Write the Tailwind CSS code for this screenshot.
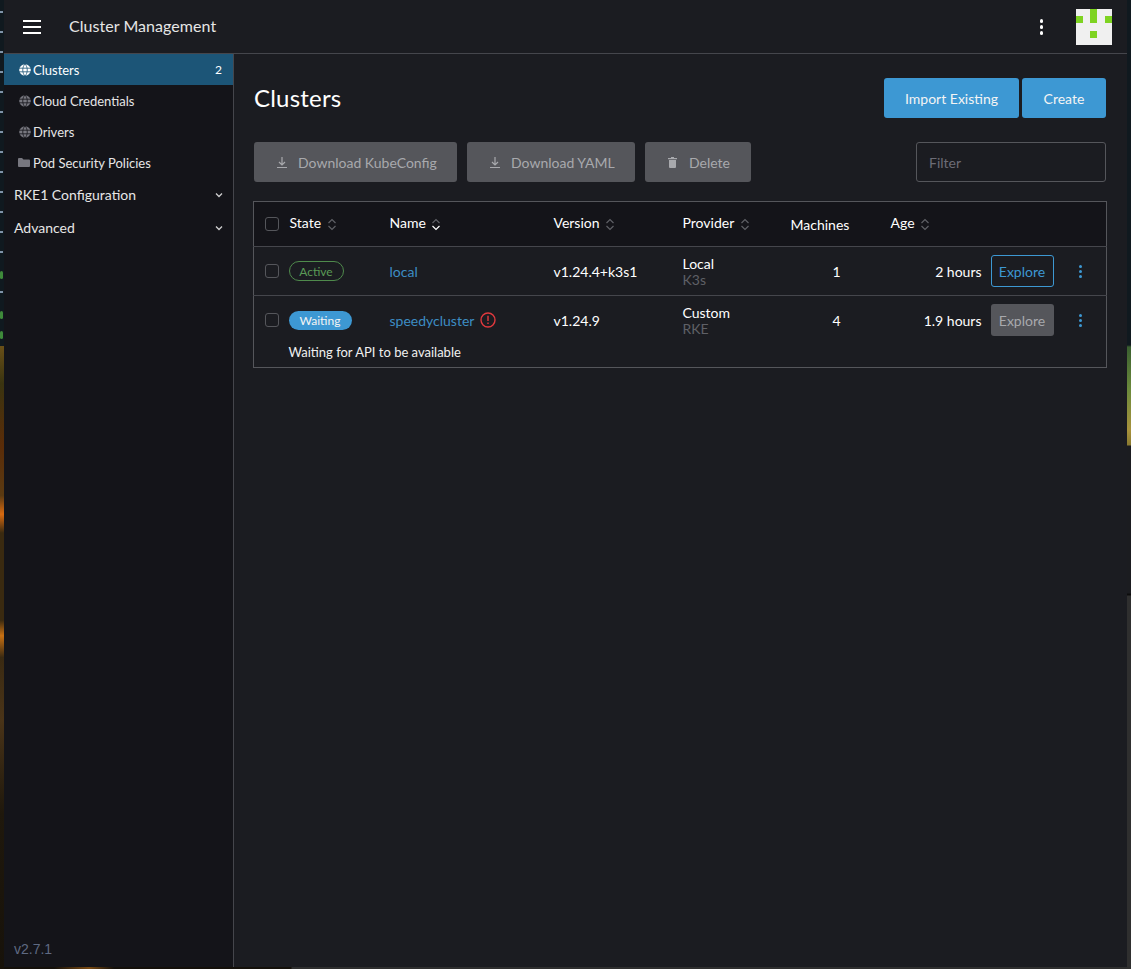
<!DOCTYPE html>
<html lang="en">
<head>
    <meta charset="UTF-8">
    <title>Cluster Management</title>
    <script src="https://cdn.jsdelivr.net/npm/@tailwindcss/browser@4"></script>
</head>
<body class="bg-[#0c0f10] font-['Lato',sans-serif] text-sm text-white overflow-hidden">
<div class="flex h-[969px]">
    <!-- desktop showing behind the window, left edge -->
    <svg class="shrink-0" width="4" height="969" viewBox="0 0 4 969">
        <defs>
            <linearGradient id="wall" x1="0" y1="0" x2="0" y2="1">
                <stop offset="0" stop-color="#6a5018"/>
                <stop offset="0.06" stop-color="#3a3410"/>
                <stop offset="0.16" stop-color="#5a2c08"/>
                <stop offset="0.24" stop-color="#5a3a12"/>
                <stop offset="0.27" stop-color="#d86a10"/>
                <stop offset="0.30" stop-color="#3a2a10"/>
                <stop offset="0.44" stop-color="#3a2a10"/>
                <stop offset="0.465" stop-color="#c87012"/>
                <stop offset="0.50" stop-color="#3a2a12"/>
                <stop offset="0.60" stop-color="#4a3418"/>
                <stop offset="0.75" stop-color="#1f180c"/>
                <stop offset="1" stop-color="#17120a"/>
            </linearGradient>
        </defs>
        <rect width="4" height="346" fill="#10191f"/>
        <rect y="346" width="4" height="623" fill="url(#wall)"/>
        <g fill="#7f93a8">
            <rect y="11" width="3" height="2"/><rect y="31" width="3" height="2"/><rect y="51" width="3" height="2"/>
            <rect y="71" width="3" height="2"/><rect y="91" width="3" height="2"/><rect y="111" width="3" height="2"/>
            <rect y="131" width="3" height="2"/><rect y="151" width="3" height="2"/><rect y="171" width="3" height="2"/>
            <rect y="191" width="3" height="2"/><rect y="211" width="3" height="2"/><rect y="231" width="3" height="2"/>
            <rect y="251" width="3" height="2"/><rect y="291" width="3" height="2"/>
        </g>
        <g fill="#3f8a3a">
            <rect y="271" width="3" height="8" rx="1.500"/><rect y="311" width="3" height="8" rx="1.500"/><rect y="331" width="3" height="8" rx="1.500"/>
        </g>
    </svg>

    <div class="w-[1123px] shrink-0 flex flex-col">
        <div class="h-[967px] flex flex-col bg-[#1b1c21]">
            <!-- Top bar -->
            <header class="h-[54px] shrink-0 flex items-center border-b border-[#45464c]">
                <button class="ml-[19px] w-[18px] flex flex-col gap-[4px]">
                    <span class="block h-[2px] bg-white"></span>
                    <span class="block h-[2px] bg-white"></span>
                    <span class="block h-[2px] bg-white"></span>
                </button>
                <div class="ml-[28px] pb-[2px] text-base tracking-[0.05px] text-[#e6e6e6]">Cluster Management</div>
                <div class="ml-auto mr-[33px] flex flex-col gap-[2px]">
                    <span class="block w-[3px] h-[4px] rounded-full bg-white"></span>
                    <span class="block w-[3px] h-[4px] rounded-full bg-white"></span>
                    <span class="block w-[3px] h-[4px] rounded-full bg-white"></span>
                </div>
                <svg class="mr-[15px]" width="36" height="36" viewBox="0 0 36 36">
                    <rect width="36" height="36" fill="#f0f0f0"/>
                    <rect x="0" y="7" width="7" height="7" fill="#7ed321"/>
                    <rect x="14" y="0" width="7" height="14" fill="#7ed321"/>
                    <rect x="29" y="7" width="7" height="7" fill="#7ed321"/>
                    <rect x="14" y="22" width="7" height="7" fill="#7ed321"/>
                </svg>
            </header>

            <div class="flex flex-1 min-h-0">
                <!-- Sidebar -->
                <aside class="w-[230px] shrink-0 flex flex-col bg-[#141419] border-r border-[#45464c]">
                    <a class="h-[31px] flex items-center pl-[15px] pr-[11px] bg-[#1c5577] text-[13px] text-white">
                        <svg class="mr-[2px]" width="12" height="12" viewBox="0 0 12 12" fill="none" stroke="#1c5577" stroke-width="0.800"><circle cx="6" cy="6" r="5.800" fill="#ffffff" stroke="none"/><path d="M0 4.200h12M0 7.800h12M6 0c-3 3-3 9 0 12M6 0c3 3 3 9 0 12"/></svg>
                        <span class="pt-[2px]">Clusters</span>
                        <span class="ml-auto text-xs">2</span>
                    </a>
                    <a class="h-[31px] flex items-center pl-[15px] text-[13px] text-[#e6e6e6]">
                        <svg class="mr-[2px]" width="12" height="12" viewBox="0 0 12 12" fill="none" stroke="#141419" stroke-width="0.800"><circle cx="6" cy="6" r="5.800" fill="#77777f" stroke="none"/><path d="M0 4.200h12M0 7.800h12M6 0c-3 3-3 9 0 12M6 0c3 3 3 9 0 12"/></svg>
                        <span class="pt-[2px]">Cloud Credentials</span>
                    </a>
                    <a class="h-[31px] flex items-center pl-[15px] text-[13px] text-[#e6e6e6]">
                        <svg class="mr-[2px]" width="12" height="12" viewBox="0 0 12 12" fill="none" stroke="#141419" stroke-width="0.800"><circle cx="6" cy="6" r="5.800" fill="#77777f" stroke="none"/><path d="M0 4.200h12M0 7.800h12M6 0c-3 3-3 9 0 12M6 0c3 3 3 9 0 12"/></svg>
                        <span class="pt-[2px]">Drivers</span>
                    </a>
                    <a class="h-[31px] flex items-center pl-[14px] text-[13px] text-[#e6e6e6]">
                        <svg class="mr-[3px]" width="12" height="11" viewBox="0 0 12 11"><path d="M0 2a1 1 0 0 1 1-1h3l1.500 1.500H11a1 1 0 0 1 1 1V9a1 1 0 0 1-1 1H1a1 1 0 0 1-1-1z" fill="#77777f"/></svg>
                        <span class="pt-[2px]">Pod Security Policies</span>
                    </a>
                    <div class="h-[33px] flex items-center pl-[10px] pr-[10px] text-[#e6e6e6]">
                        <span>RKE1 Configuration</span>
                        <svg class="ml-auto" width="8" height="6" viewBox="0 0 8 6" fill="none" stroke="#cfcfcf" stroke-width="1.300"><path d="M1 1.500l3 3 3-3"/></svg>
                    </div>
                    <div class="h-[33px] flex items-center pl-[10px] pr-[10px] text-[#e6e6e6]">
                        <span>Advanced</span>
                        <svg class="ml-auto" width="8" height="6" viewBox="0 0 8 6" fill="none" stroke="#cfcfcf" stroke-width="1.300"><path d="M1 1.500l3 3 3-3"/></svg>
                    </div>
                    <div class="mt-auto pl-[10px] pb-[8px] text-[#5f6a82] font-['Liberation_Sans',sans-serif]">v2.7.1</div>
                </aside>

                <!-- Main -->
                <main class="flex-1 min-w-0 pl-[20px] pr-[21px] pt-[24px]">
                    <div class="flex items-center h-[40px]">
                        <h1 class="text-2xl tracking-[0.2px] text-white">Clusters</h1>
                        <button class="ml-auto w-[135px] h-[40px] pt-[2px] rounded-[3px] bg-[#3d98d3] text-[#f4f4f4]">Import Existing</button>
                        <button class="ml-[3px] w-[84px] h-[40px] pt-[2px] rounded-[3px] bg-[#3d98d3] text-[#f4f4f4]">Create</button>
                    </div>

                    <div class="flex items-center mt-[24px] h-[40px] text-[#a8a9ad]">
                        <button class="flex items-center w-[203px] h-[40px] pl-[22px] rounded-[3px] bg-[#55565b]">
                            <svg class="mr-[10px]" width="12" height="13" viewBox="0 0 12 13" fill="none" stroke="#a8a9ad" stroke-width="1.200"><path d="M6 1v7.500M3 6l3 3 3-3M1 11.500h10"/></svg>
                            <span class="pt-[2px]">Download KubeConfig</span>
                        </button>
                        <button class="flex items-center ml-[10px] w-[168px] h-[40px] pl-[22px] rounded-[3px] bg-[#55565b]">
                            <svg class="mr-[10px]" width="12" height="13" viewBox="0 0 12 13" fill="none" stroke="#a8a9ad" stroke-width="1.200"><path d="M6 1v7.500M3 6l3 3 3-3M1 11.500h10"/></svg>
                            <span class="pt-[2px]">Download YAML</span>
                        </button>
                        <button class="flex items-center ml-[10px] w-[106px] h-[40px] pl-[23px] rounded-[3px] bg-[#55565b]">
                            <svg class="mr-[12px]" width="9" height="11" viewBox="0 0 9 11"><path d="M3 0h3v1h3v1.200H0V1h3zM1 3h7v7a1 1 0 0 1-1 1H2a1 1 0 0 1-1-1z" fill="#a8a9ad"/></svg>
                            <span class="pt-[2px]">Delete</span>
                        </button>
                        <input class="ml-auto w-[190px] h-[40px] px-[12px] rounded-[3px] bg-transparent border border-[#55565b] placeholder:text-[#6c6c76]" placeholder="Filter">
                    </div>

                    <!-- Table -->
                    <table class="table-fixed w-[853px] ml-[-1px] mt-[19px] border border-[#55565b] border-collapse">
                        <colgroup>
                            <col class="w-[35px]"><col class="w-[100px]"><col class="w-[164px]"><col class="w-[130px]"><col class="w-[108px]"><col class="w-[100px]"><col class="w-[100px]"><col class="w-[73px]"><col class="w-[43px]">
                        </colgroup>
                        <thead class="bg-[#141419]">
                            <tr class="h-[45px] border-b border-[#45464c] text-left">
                                <th class="pl-[11px] font-normal"><span class="block w-[14px] h-[14px] rounded-[3px] border border-[#55565b]"></span></th>
                                <th class="font-normal pb-[2px] pl-[1px]">State <svg class="inline ml-[2px]" width="10" height="13" viewBox="0 0 10 13" fill="none" stroke="#5f6066" stroke-width="1.200"><path d="M1.500 5l3.500-3.500L8.500 5M1.500 8l3.500 3.500L8.500 8"/></svg></th>
                                <th class="font-normal pb-[2px] pl-[1px]">Name <svg class="inline ml-[2px]" width="10" height="13" viewBox="0 0 10 13" fill="none" stroke-width="1.200"><path stroke="#5f6066" d="M1.500 5l3.500-3.500L8.500 5"/><path stroke="#ffffff" d="M1.500 8l3.500 3.500L8.500 8"/></svg></th>
                                <th class="font-normal pb-[2px] pl-[1px]">Version <svg class="inline ml-[2px]" width="10" height="13" viewBox="0 0 10 13" fill="none" stroke="#5f6066" stroke-width="1.200"><path d="M1.500 5l3.500-3.500L8.500 5M1.500 8l3.500 3.500L8.500 8"/></svg></th>
                                <th class="font-normal pb-[2px]">Provider <svg class="inline ml-[2px]" width="10" height="13" viewBox="0 0 10 13" fill="none" stroke="#5f6066" stroke-width="1.200"><path d="M1.500 5l3.500-3.500L8.500 5M1.500 8l3.500 3.500L8.500 8"/></svg></th>
                                <th class="font-normal pt-[2px]">Machines</th>
                                <th class="font-normal pb-[2px]">Age <svg class="inline ml-[2px]" width="10" height="13" viewBox="0 0 10 13" fill="none" stroke="#5f6066" stroke-width="1.200"><path d="M1.500 5l3.500-3.500L8.500 5M1.500 8l3.500 3.500L8.500 8"/></svg></th>
                                <th></th>
                                <th></th>
                            </tr>
                        </thead>
                        <tbody>
                            <tr class="h-[49px] border-b border-[#45464c]">
                                <td class="pl-[11px]"><span class="block w-[14px] h-[14px] rounded-[3px] border border-[#55565b]"></span></td>
                                <td><span class="inline-flex items-center justify-center w-[55px] h-[20px] pt-[2px] rounded-full border border-[#4f8a4c] text-xs text-[#5a9a56]">Active</span></td>
                                <td class="pt-[2px] pl-[1px] text-[#3d8dc4]">local</td>
                                <td class="pt-[2px] pl-[1px]">v1.24.4+k3s1</td>
                                <td class="pt-[2px] leading-[16px]">Local<br><span class="text-[#5f6066]">K3s</span></td>
                                <td class="pt-[2px] text-right pr-[50px]">1</td>
                                <td class="pt-[2px] text-right pr-[9px]">2 hours</td>
                                <td><span class="flex items-center justify-center w-[63px] h-[32px] pt-[2px] rounded-[3px] border border-[#3d98d3] text-[#3d98d3]">Explore</span></td>
                                <td class="pl-[15px]"><span class="flex flex-col gap-[2px] w-[3px]"><i class="block h-[3px] rounded-full bg-[#3d98d3]"></i><i class="block h-[3px] rounded-full bg-[#3d98d3]"></i><i class="block h-[3px] rounded-full bg-[#3d98d3]"></i></span></td>
                            </tr>
                            <tr class="h-[49px]">
                                <td class="pl-[11px]"><span class="block w-[14px] h-[14px] rounded-[3px] border border-[#55565b]"></span></td>
                                <td><span class="inline-flex items-center justify-center w-[63px] h-[19px] pt-[2px] rounded-full bg-[#3d98d3] text-xs text-[#f4f4f4]">Waiting</span></td>
                                <td class="pl-[1px] text-[#3d8dc4]"><span class="flex items-center gap-[6px]"><span class="pt-[2px]">speedycluster</span> <svg width="16" height="16" viewBox="0 0 16 16" fill="none" stroke="#e0393e" stroke-width="1.400"><circle cx="8" cy="8" r="7"/><path d="M8 3.800v5.200M8 10.500v1.500"/></svg></span></td>
                                <td class="pt-[2px] pl-[1px]">v1.24.9</td>
                                <td class="pt-[2px] leading-[16px]">Custom<br><span class="text-[#5f6066]">RKE</span></td>
                                <td class="pt-[2px] text-right pr-[50px]">4</td>
                                <td class="pt-[2px] text-right pr-[9px]">1.9 hours</td>
                                <td><span class="flex items-center justify-center w-[63px] h-[32px] pt-[2px] rounded-[3px] bg-[#55565b] text-[#a8a9ad]">Explore</span></td>
                                <td class="pl-[15px]"><span class="flex flex-col gap-[2px] w-[3px]"><i class="block h-[3px] rounded-full bg-[#3d98d3]"></i><i class="block h-[3px] rounded-full bg-[#3d98d3]"></i><i class="block h-[3px] rounded-full bg-[#3d98d3]"></i></span></td>
                            </tr>
                            <tr class="h-[23px]">
                                <td></td>
                                <td colspan="8" class="align-top text-[13px] leading-[14px] text-[#f0f0f0]">Waiting for API to be available</td>
                            </tr>
                        </tbody>
                    </table>
                </main>
            </div>
        </div>
        <!-- desktop showing below the window -->
        <div class="h-[2px] bg-[linear-gradient(to_right,#14100a_0px,#14100a_50px,#7a4a12_85px,#14100a_110px,#14100a_287px,#2f2f2f_288px,#2f2f2f_100%)]"></div>
    </div>

    <!-- desktop showing behind the window, right edge -->
    <div class="w-[4px] h-full bg-[linear-gradient(to_bottom,#10191f_0px,#10191f_345px,#3a5f30_347px,#6c8a3c_390px,#a8923c_430px,#8a7a30_445px,#1b1c20_446px,#1b1c20_593px,#0c0c0c_594px,#0c0c0c_595px,#2f2f2f_596px,#2f2f2f_969px)]"></div>
</div>
</body>
</html>
